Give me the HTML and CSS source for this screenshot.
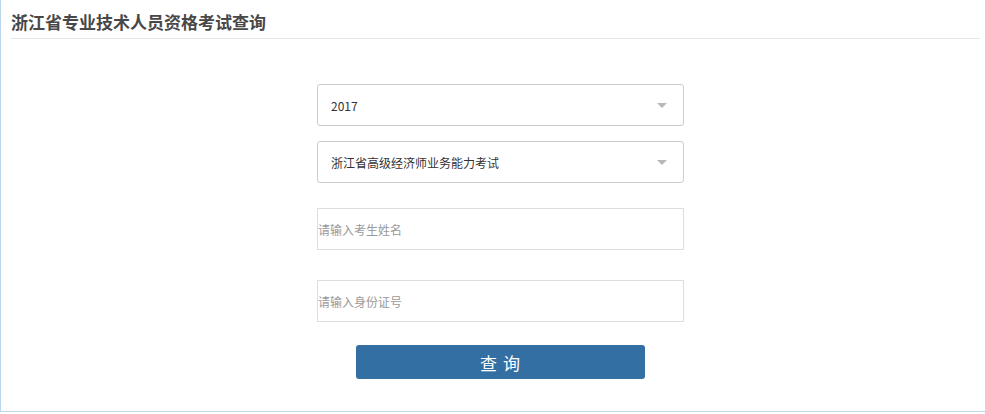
FILE: index.html
```html
<!DOCTYPE html>
<html lang="zh-CN">
<head>
<meta charset="utf-8">
<title>浙江省专业技术人员资格考试查询</title>
<link rel="stylesheet" href="styles.css">
</head>
<body>
<div class="panel">
  <div class="head">
    <h1 class="title">浙江省专业技术人员资格考试查询</h1>
  </div>
  <form class="form">
    <div class="select"><span class="select-text">2017</span><span class="caret"></span></div>
    <div class="select select-2"><span class="select-text">浙江省高级经济师业务能力考试</span><span class="caret"></span></div>
    <input class="field field-1" type="text" placeholder="请输入考生姓名">
    <input class="field field-2" type="text" placeholder="请输入身份证号">
    <button class="btn" type="button">查 询</button>
  </form>
</div>
</body>
</html>
```
FILE: styles.css
```css
html, body {
  margin: 0;
  padding: 0;
  background: #fff;
  font-family: "Noto Sans CJK SC", "Noto Sans", sans-serif;
}
.panel {
  height: 411px;
  border-left: 1px solid #bcd6ea;
  border-bottom: 1px solid #bcd6ea;
  box-sizing: content-box;
}
.head {
  margin-left: 10px;
  margin-right: 5px;
  padding-top: 9px;
  height: 29px;
  border-bottom: 1px solid #e6e6e6;
}
.title {
  margin: 0;
  font-size: 17px;
  line-height: 26px;
  font-weight: 700;
  color: #484848;
}
.form {
  margin: 45px 0 0 316px;
  width: 367px;
  display: flex;
  flex-direction: column;
}
.select {
  box-sizing: border-box;
  height: 42px;
  border: 1px solid #cccccc;
  border-radius: 3px;
  display: flex;
  align-items: center;
  justify-content: space-between;
  padding: 0 16px 0 13px;
  font-size: 12px;
  color: #333;
}
.select-2 {
  margin-top: 15px;
}
.caret {
  width: 0;
  height: 0;
  border-left: 5px solid transparent;
  border-right: 5px solid transparent;
  border-top: 5px solid #b8b8b8;
}
.field {
  box-sizing: border-box;
  height: 42px;
  width: 367px;
  border: 1px solid #dedede;
  border-radius: 0;
  padding: 0;
  margin: 0;
  font-family: "Noto Sans CJK SC", sans-serif;
  font-size: 12px;
  color: #333;
  outline: none;
}
.field::placeholder {
  color: #9a9a9a;
}
.field-1 {
  margin-top: 25px;
}
.field-2 {
  margin-top: 30px;
}
.btn {
  margin: 23px auto 0;
  width: 289px;
  height: 34px;
  border: none;
  border-radius: 3px;
  background: #346fa3;
  color: #fff;
  font-family: "Noto Sans CJK SC", sans-serif;
  font-size: 17px;
  letter-spacing: 1px;
  padding: 0;
}
```
